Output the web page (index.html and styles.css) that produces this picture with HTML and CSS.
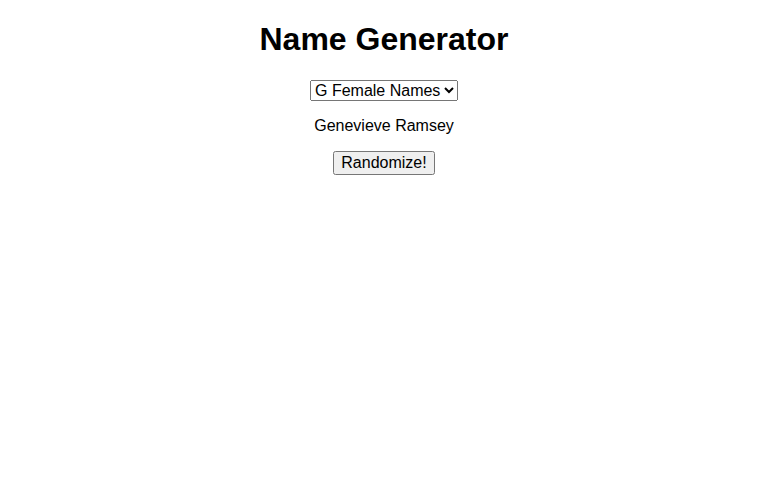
FILE: index.html
```html
<!DOCTYPE html>
<html lang="en">
<head>
  <meta charset="UTF-8">
  <meta name="viewport" content="width=device-width, initial-scale=1.0">
  <title>Name Generator</title>
  <link rel="stylesheet" href="styles.css">
</head>
<body>
  <h1>Name Generator</h1>

  <!-- Lista de nomes escolhida -->
  <select id="list" class="picker" onchange="randomize()">
    <option value="gf" selected>G Female Names</option>
    <option value="gm">G Male Names</option>
  </select>

  <p id="name" class="name">Genevieve Ramsey</p>
  <button class="btn" onclick="randomize()">Randomize!</button>

  <script>
    var lists = {
      gf: ["Genevieve", "Gwendolyn", "Georgia", "Grace", "Gabriela"],
      gm: ["Gregory", "Gideon", "Grant", "Gavin", "George"]
    };
    var surnames = ["Ramsey", "Gallagher", "Hughes", "Porter", "Sullivan"];

    function randomize() {
      var key = document.getElementById("list").value;
      var first = lists[key][Math.floor(Math.random() * lists[key].length)];
      var last = surnames[Math.floor(Math.random() * surnames.length)];
      document.getElementById("name").textContent = first + " " + last;
    }
  </script>
</body>
</html>
```

FILE: styles.css
```css
body {
  font-family: "Liberation Sans", Arial, sans-serif;
  text-align: center;
  color: #000;
  background: #fff;
}
h1 {
  font-size: 32px;
  margin: 13px 0 22px;
}
.picker, .btn {
  font-family: inherit;
  font-size: 16px;
}
```
